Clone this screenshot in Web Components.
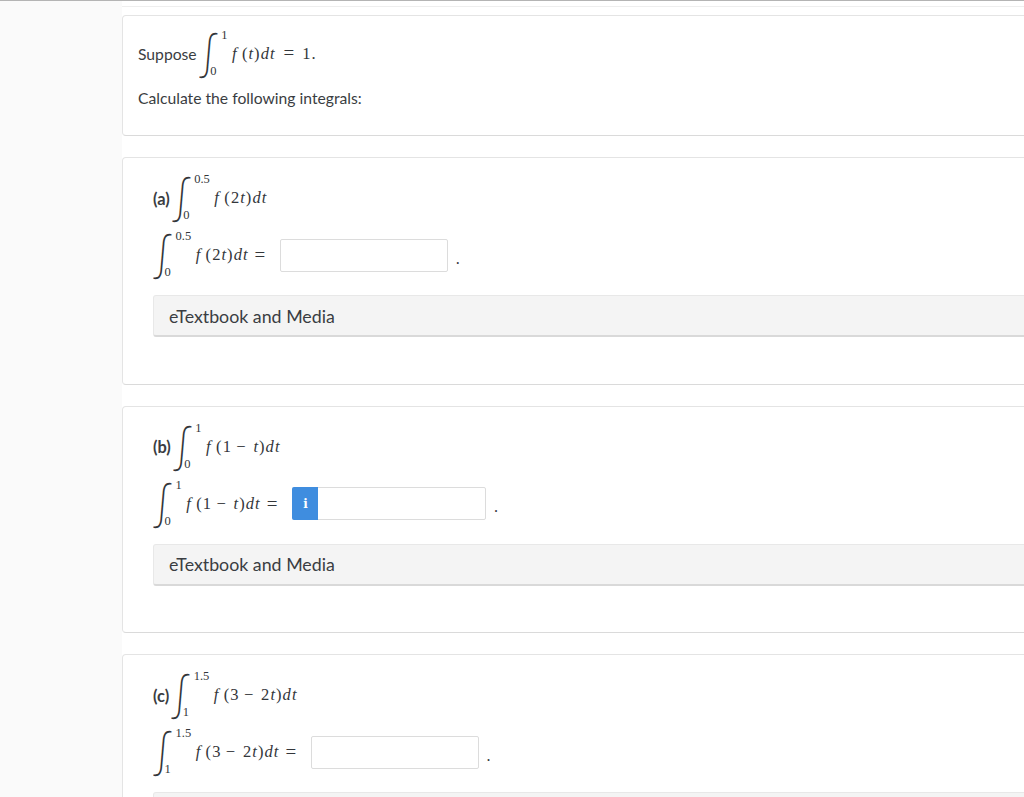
<!DOCTYPE html>
<html><head><meta charset="utf-8">
<style>
html,body{margin:0;padding:0;height:797px;overflow:hidden;background:#fff}
body{font-family:Lato,sans-serif;font-size:15.7px;color:#3a3d42}
</style></head><body>
<page-shell>
<q-card intro>
  <q-line>Suppose<m-int hi="1" lo="0" style="margin-left:2px"><i>f</i>&thinsp;(<i>t</i>)<i>dt</i><eq-sign></eq-sign>1.</m-int></q-line>
  <text-row>Calculate the following integrals:</text-row>
</q-card>
<q-card>
  <q-line><part-label>(a)</part-label><m-int hi="0.5" lo="0"><i>f</i>&thinsp;(2<i>t</i>)<i>dt</i></m-int></q-line>
  <q-line answer><m-int hi="0.5" lo="0"><i>f</i>&thinsp;(2<i>t</i>)<i>dt</i></m-int><answer-box></answer-box></q-line>
  <media-bar>eTextbook and Media</media-bar>
</q-card>
<q-card>
  <q-line><part-label>(b)</part-label><m-int hi="1" lo="0"><i>f</i>&thinsp;(1&thinsp;−&thinsp;&hairsp;<i>t</i>)<i>dt</i></m-int></q-line>
  <q-line answer><m-int hi="1" lo="0"><i>f</i>&thinsp;(1&thinsp;−&thinsp;&hairsp;<i>t</i>)<i>dt</i></m-int><answer-box info></answer-box></q-line>
  <media-bar>eTextbook and Media</media-bar>
</q-card>
<q-card>
  <q-line><part-label>(c)</part-label><m-int hi="1.5" lo="1"><i>f</i>&thinsp;(3&thinsp;−&thinsp;&hairsp;2<i>t</i>)<i>dt</i></m-int></q-line>
  <q-line answer><m-int hi="1.5" lo="1"><i>f</i>&thinsp;(3&thinsp;−&thinsp;&hairsp;2<i>t</i>)<i>dt</i></m-int><answer-box></answer-box></q-line>
  <media-bar></media-bar>
</q-card>
</page-shell>
<script>
function def(name,html,init){
  customElements.define(name,class extends HTMLElement{
    constructor(){super();this.attachShadow({mode:'open'}).innerHTML=html;}
    connectedCallback(){if(init)init(this,this.shadowRoot);}
  });
}
def('page-shell',`<style>
:host{display:flex;width:1024px;height:797px;overflow:hidden;box-sizing:border-box;border-top:1px solid #b4b4b4;background:#fff}
.side{width:122px;flex:none;background:#fafafa}
.main{flex:1;min-width:0}
.rule{height:1px;margin-top:5px;background:#eee}
.cards{padding-top:8px;width:1000px}
</style><div class="side"></div><div class="main"><div class="rule"></div><div class="cards"><slot></slot></div></div>`);
def('q-card',`<style>
:host{display:block;box-sizing:border-box;border:1px solid #e4e4e4;border-bottom-color:#dadada;border-radius:4px;background:#fff;margin-bottom:21px;padding:15px 0 0 30px;height:227.5px}
:host([intro]){padding:13px 0 0 15px;height:121px}
</style><slot></slot>`);
def('q-line',`<style>
:host{display:flex;align-items:center;height:50px}
:host([answer]){margin-top:7px}
</style><slot></slot>`);
def('text-row',`<style>:host{display:block;margin-top:7px;line-height:24px}</style><slot></slot>`);
def('part-label',`<style>:host{display:block;font-weight:700;font-size:16.4px;margin-right:2px}</style><slot></slot>`);
def('eq-sign',`<style>:host{display:inline-block;margin:0 8px;font-size:19px;line-height:16px;letter-spacing:0}</style>=`);
def('m-int',`<style>
:host{display:inline-flex;align-items:center;font-family:"Liberation Serif",serif;font-size:16.5px;letter-spacing:1.05px;color:#33363a}
.i{font:300 46px/50px Lato,sans-serif;width:11.5px;margin-top:-2px;letter-spacing:0;white-space:nowrap;transform:scaleX(.8);transform-origin:0 50%}
.lim{display:flex;flex-direction:column;justify-content:space-between;height:50px;margin-top:-2px;font-size:12.5px;line-height:14px;letter-spacing:0}
.hi{margin-left:11px}
.lo{margin-left:0}
.e{white-space:pre;margin-left:4.5px}
</style><span class="i">∫</span><span class="lim"><span class="hi"></span><span class="lo"></span></span><span class="e"><slot></slot></span>`,
(h,s)=>{s.querySelector('.hi').textContent=h.getAttribute('hi');s.querySelector('.lo').textContent=h.getAttribute('lo');});
def('answer-box',`<style>
:host{display:flex;align-items:center;color:#33363a}
.eq{font-family:"Liberation Serif",serif;font-size:19px;line-height:16px;margin:0 15px 0 6px}
.box{display:flex;height:33px;width:168px;box-sizing:border-box;border:1px solid #dcdcdc;border-radius:2px;background:#fff}
.info{display:none;width:26px;margin:-1px 0 -1px -1px;background:#3f8ddf;color:#fff;font:700 12px "DejaVu Serif",serif;align-items:center;justify-content:center;border-radius:2px 0 0 2px}
:host([info]) .info{display:flex}
:host([info]) .box{width:194px}
.dot{margin:7px 0 0 7.5px;font:16px "Liberation Serif",serif}
</style><span class="eq">=</span><span class="box"><span class="info">i</span></span><span class="dot">.</span>`);
def('media-bar',`<style>
:host{display:flex;align-items:center;box-sizing:border-box;height:42px;margin-top:15px;padding-left:15px;background:#f4f4f4;border:1px solid #e8e8e8;border-bottom:2px solid #d9d9d9;border-radius:3px;font-size:17.8px;color:#3a3d42}
</style><slot></slot>`);
</script>
</body></html>
